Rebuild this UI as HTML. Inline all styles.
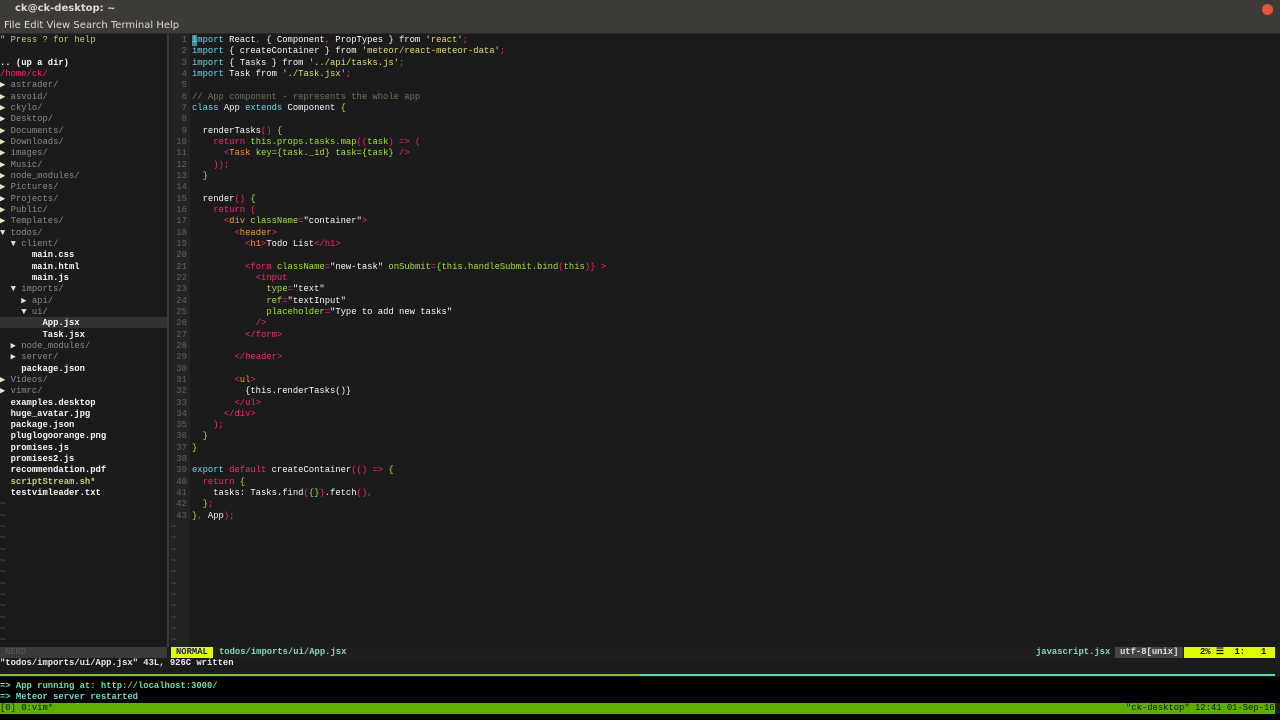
<!DOCTYPE html>
<html><head><meta charset="utf-8"><style>
*{margin:0;padding:0;box-sizing:border-box}
body{width:1280px;height:720px;background:#1b1b1b;overflow:hidden;position:relative;font-family:"Liberation Mono",monospace}
#top{position:absolute;left:0;top:0;width:1280px;height:34px;background:#3c3b38;border-bottom:1px solid #2a2a28}
#title{position:absolute;left:15px;top:3px;font:bold 10px "DejaVu Sans",sans-serif;color:#dfdbd2}
#menu{position:absolute;left:4px;top:20px;font:10px "DejaVu Sans",sans-serif;color:#dfdbd2;word-spacing:0px}
#close{position:absolute;left:1262px;top:4px;width:11px;height:11px;border-radius:50%;background:#e0573a}
pre{position:absolute;font-family:"Liberation Mono",monospace;font-size:8.85px;line-height:11.333px;white-space:pre;color:#f8f8f2}
.k{color:#66d9ef}.r{color:#f92672}.s{color:#e6db74}.c{color:#75715e}.g{color:#a6e22e}.o{color:#fd971f}.d{color:#8a8a8a}.t{color:#e8e8c8}.n{color:#5a6466}.b{font-weight:bold}.y{color:#c8c87a}
#gut{position:absolute;left:170px;top:34px;width:20px;height:613px;background:#232323}
#sep{position:absolute;left:167px;top:34px;width:2px;height:613px;background:#3a3a3a}
</style></head><body>
<div id="top"><div id="title">ck@ck-desktop: ~</div><div id="menu">File Edit View Search Terminal Help</div><div id="close"></div></div>
<div id="gut"></div><div id="sep"></div>
<div style="position:absolute;left:0;top:317px;width:167px;height:11px;background:#333"></div>
<pre style="left:0;top:35px"><span class="y">" Press ? for help</span>

<span class="b">.. (up a dir)</span>
<span class="r">/home/ck/</span>
<span class="t">▶</span> <span class="d">astrader/</span>
<span class="t">▶</span> <span class="d">asvoid/</span>
<span class="t">▶</span> <span class="d">ckylo/</span>
<span class="t">▶</span> <span class="d">Desktop/</span>
<span class="t">▶</span> <span class="d">Documents/</span>
<span class="t">▶</span> <span class="d">Downloads/</span>
<span class="t">▶</span> <span class="d">images/</span>
<span class="t">▶</span> <span class="d">Music/</span>
<span class="t">▶</span> <span class="d">node_modules/</span>
<span class="t">▶</span> <span class="d">Pictures/</span>
<span class="t">▶</span> <span class="d">Projects/</span>
<span class="t">▶</span> <span class="d">Public/</span>
<span class="t">▶</span> <span class="d">Templates/</span>
<span class="t">▼</span> <span class="d">todos/</span>
  <span class="t">▼</span> <span class="d">client/</span>
      <span class="b">main.css</span>
      <span class="b">main.html</span>
      <span class="b">main.js</span>
  <span class="t">▼</span> <span class="d">imports/</span>
    <span class="t">▶</span> <span class="d">api/</span>
    <span class="t">▼</span> <span class="d">ui/</span>
        <span class="b">App.jsx</span>
        <span class="b">Task.jsx</span>
  <span class="t">▶</span> <span class="d">node_modules/</span>
  <span class="t">▶</span> <span class="d">server/</span>
    <span class="b">package.json</span>
<span class="t">▶</span> <span class="d">Videos/</span>
<span class="t">▶</span> <span class="d">vimrc/</span>
  <span class="b">examples.desktop</span>
  <span class="b">huge_avatar.jpg</span>
  <span class="b">package.json</span>
  <span class="b">pluglogoorange.png</span>
  <span class="b">promises.js</span>
  <span class="b">promises2.js</span>
  <span class="b">recommendation.pdf</span>
  <span class="y b">scriptStream.sh*</span>
  <span class="b">testvimleader.txt</span>
<span class="n">~
~
~
~
~
~
~
~
~
~
~
~
~</span></pre>
<pre class="n" style="left:171px;top:35px">  1
  2
  3
  4
  5
  6
  7
  8
  9
 10
 11
 12
 13
 14
 15
 16
 17
 18
 19
 20
 21
 22
 23
 24
 25
 26
 27
 28
 29
 30
 31
 32
 33
 34
 35
 36
 37
 38
 39
 40
 41
 42
 43
~
~
~
~
~
~
~
~
~
~
~</pre>
<div style="position:absolute;left:192px;top:35px;width:5px;height:11px;background:#66d9ef;opacity:.6"></div>
<pre style="left:192px;top:35px"><span class="k">import</span> React<span class="r">,</span> { Component<span class="r">,</span> PropTypes } from <span class="s">'react'</span><span class="r">;</span>
<span class="k">import</span> { createContainer } from <span class="s">'meteor/react-meteor-data'</span><span class="r">;</span>
<span class="k">import</span> { Tasks } from <span class="s">'../api/tasks.js'</span><span class="r">;</span>
<span class="k">import</span> Task from <span class="s">'./Task.jsx'</span><span class="r">;</span>

<span class="c">// App component - represents the whole app</span>
<span class="k">class</span> App <span class="k">extends</span> Component <span class="g">{</span>

  renderTasks<span class="r">()</span> <span class="g">{</span>
    <span class="r">return</span> <span class="g">this.props.tasks.map</span><span class="r">((</span><span class="g">task</span><span class="r">) =&gt; (</span>
      <span class="r">&lt;</span><span class="o">Task</span> <span class="g">key={task._id}</span> <span class="g">task={task}</span> <span class="r">/&gt;</span>
    <span class="r">));</span>
  <span class="g">}</span>

  render<span class="r">()</span> <span class="g">{</span>
    <span class="r">return (</span>
      <span class="r">&lt;</span><span class="o">div</span> <span class="g">className</span><span class="r">=</span>"container"<span class="r">&gt;</span>
        <span class="r">&lt;</span><span class="o">header</span><span class="r">&gt;</span>
          <span class="r">&lt;</span><span class="o">h1</span><span class="r">&gt;</span>Todo List<span class="r">&lt;/h1&gt;</span>

          <span class="r">&lt;form</span> <span class="g">className</span><span class="r">=</span>"new-task" <span class="g">onSubmit</span><span class="r">=</span><span class="g">{this.handleSubmit.bind</span><span class="r">(</span><span class="g">this</span><span class="r">)}</span> <span class="r">&gt;</span>
            <span class="r">&lt;input</span>
              <span class="g">type</span><span class="r">=</span>"text"
              <span class="g">ref</span><span class="r">=</span>"textInput"
              <span class="g">placeholder</span><span class="r">=</span>"Type to add new tasks"
            <span class="r">/&gt;</span>
          <span class="r">&lt;/form&gt;</span>

        <span class="r">&lt;/header&gt;</span>

        <span class="r">&lt;</span><span class="o">ul</span><span class="r">&gt;</span>
          {this.renderTasks()}
        <span class="r">&lt;/ul&gt;</span>
      <span class="r">&lt;/div&gt;</span>
    <span class="r">);</span>
  <span class="g">}</span>
<span class="g">}</span>

<span class="k">export</span> <span class="r">default</span> createContainer<span class="r">(() =&gt;</span> <span class="g">{</span>
  <span class="r">return</span> <span class="g">{</span>
    tasks: Tasks.find<span class="r">(</span><span class="g">{}</span><span class="r">)</span>.fetch<span class="r">(),</span>
  <span class="g">}</span><span class="r">;</span>
<span class="g">}</span><span class="r">,</span> App<span class="r">);</span></pre>
<div style="position:absolute;left:0;top:647px;width:1280px;height:11px;background:#1e1e1e"></div>
<div style="position:absolute;left:0;top:647px;width:167px;height:11px;background:#3a3a3a"></div>
<div style="position:absolute;left:171px;top:647px;width:42px;height:11px;background:#dfff00"></div>
<div style="position:absolute;left:1115px;top:647px;width:68px;height:11px;background:#444"></div>
<div style="position:absolute;left:1184px;top:647px;width:91px;height:11px;background:#dfff00"></div>
<pre style="left:5px;top:647px;color:#5a5a5a">NERD</pre>
<pre style="left:176px;top:647px;color:#1a1a50;font-weight:bold">NORMAL</pre>
<pre style="left:219px;top:647px;color:#87d7af;font-weight:bold">todos/imports/ui/App.jsx</pre>
<pre style="left:1036px;top:647px;color:#87d7af;font-weight:bold">javascript.jsx</pre>
<pre style="left:1120px;top:647px;color:#e0e0e0;font-weight:bold">utf-8[unix]</pre>
<pre style="left:1200px;top:647px;color:#111;font-weight:bold">2% ☰  1:   1</pre>
<pre style="left:0;top:658px;color:#e8e8e8;font-weight:bold">"todos/imports/ui/App.jsx" 43L, 926C written</pre>
<div style="position:absolute;left:0;top:674px;width:640px;height:2px;background:#7cbf3a"></div>
<div style="position:absolute;left:640px;top:674px;width:635px;height:2px;background:#5fd7af"></div>
<div style="position:absolute;left:0;top:677px;width:1280px;height:26px;background:#000"></div>
<pre style="left:0;top:681px;color:#6fdcb8;font-weight:bold">=&gt; App running at: http://localhost:3000/
=&gt; Meteor server restarted</pre>
<div style="position:absolute;left:0;top:703px;width:1275px;height:11px;background:#5faf00"></div>
<div style="position:absolute;left:0;top:714px;width:1280px;height:6px;background:#000"></div>
<pre style="left:0;top:703px;color:#111">[0] 0:vim*</pre>
<pre style="left:1126px;top:703px;color:#111">"ck-desktop" 12:41 01-Sep-16</pre>
</body></html>
